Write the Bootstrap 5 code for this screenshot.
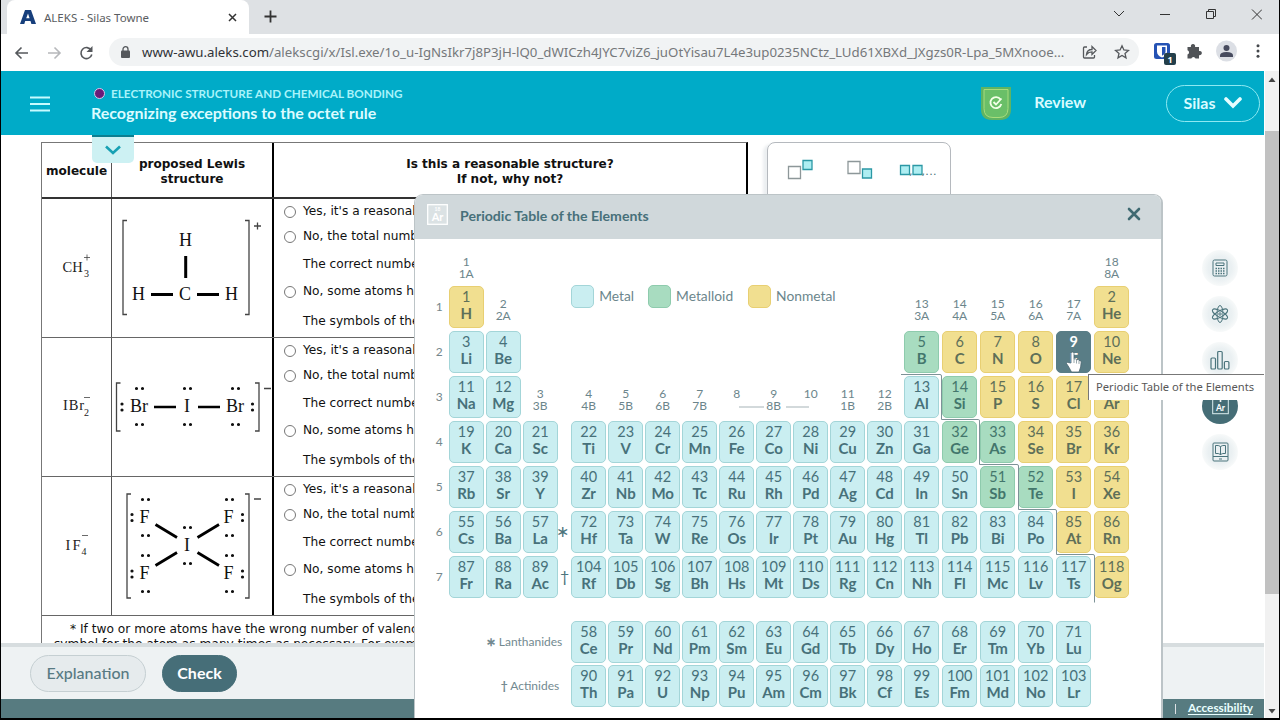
<!DOCTYPE html>
<html lang="en">
<head>
<meta charset="utf-8">
<title>ALEKS - Silas Towne</title>
<link href="https://cdn.jsdelivr.net/npm/bootstrap@5.3.0/dist/css/bootstrap.min.css" rel="stylesheet">
<style>
body{width:1280px;height:720px;overflow:hidden;background:#fff;font-family:"Lato","Liberation Sans",sans-serif;color:#4b747c}
.window{width:1280px;height:720px;border:solid #000;border-width:0 1px 2px 1px;overflow:hidden;background:#fff}
svg{display:block;flex:none}
.tabstrip{height:34px;background:#dee1e4;padding-left:6px}
.tab-on{width:242px;height:34px;background:#fff;border-radius:8px 8px 0 0;padding:0 12px 0 13px;font:11.500px "Noto Sans",sans-serif;color:#5a5d61}
.toolbar{height:37px;background:#fff;padding-left:13px}
.url{width:1030px;height:28px;margin-left:9px;margin-bottom:1px;border-radius:14px;background:#f1f3f4;font:13.240px "Noto Sans",sans-serif;color:#75787b;padding:0 9px 0 12px;white-space:nowrap;flex:none}
.url b{font-weight:400;color:#303236}
.page-col{width:1263px}
.topbar{height:64px;background:#00abc8;color:#d9fbff;width:1263px}
.topic{font-size:11.720px;font-weight:700;line-height:14px;white-space:nowrap;color:#a9f3fa}
.title{font-size:16px;font-weight:700;line-height:18px;white-space:nowrap;color:#dcfbff}
.dot-p{width:11px;height:11px;border-radius:50%;background:#6a1b78;border:1px solid #d6c8ea}
.user{width:94px;height:37px;border:1px solid #8ee9f2;border-radius:19px;font-weight:700;font-size:16px}
.work{height:508px;width:1263px;overflow:hidden;font-family:"DejaVu Sans",sans-serif;color:#111}
.q{width:707px;margin:7px 0 0 40px;border:1px solid #777;border-right:2px solid #000;border-bottom:0;font-size:12.2px;flex:none}
.q .line{border-bottom:1px solid #666;height:139px}
.q .line.hd{height:56px;border-bottom:2px solid #333;font-weight:700;font-size:12.050px;line-height:15px;text-align:center}
.q .line svg{margin-top:-1px}
.c1{width:70px;border-right:1px solid #555;flex:none}
.c2{width:162px;border-right:2px solid #000;flex:none}
.c3{padding:4px 0 0 10px;white-space:nowrap}
.opt{height:16px;line-height:16px}
.opt i{width:12px;height:12px;border:1px solid #777;border-radius:50%;margin:1px 7px 0 0;background:#fff}
.ind{padding-left:19px}
.pad{width:184px;height:90px;margin:7px 0 0 19px;border:1px solid #b5b9be;border-radius:8px;box-shadow:-4px 2px 3px #eceff1;padding:0 4px 0 19px}
.rail{width:36px;margin:115px 26px 0 auto;gap:10px}
.rnd{width:36px;height:36px;border-radius:50%;background:radial-gradient(#eaf0f2 45%,#f8fafa 72%);flex:none}
.rnd.on{background:#456d76}
.actions{height:56px;border-top:4px solid #d7dddf;background:#eef2f3;padding-left:29px;gap:16px;width:1263px}
.pill{height:37px;border-radius:19px;font-size:16px;font-weight:500;border:1px solid #c5cfd2;background:#e6ebed;color:#587a83;width:116px}
.pill.go{width:75px;background:#466e78;border-color:#466e78;color:#fff;font-weight:700}
.foot{height:19px;background:#577b80;color:#e9ffff;font-size:11.800px;font-weight:700;width:1263px;padding-right:11px}
.foot u{text-underline-offset:2px;margin-top:-2px}
.scrollb{width:14px;background:#f1f1f1;height:647px}
.thumb{height:463px;background:#c1c1c1}
.flap{left:92px;top:135px;width:42px;height:28px;background:#cdf1f3;border-top:2px solid #0b7f91;border-radius:0 0 5px 5px}
.ptable{left:413px;top:194px;width:749px;height:540px;background:#fff;border:solid #bcc4c7;border-width:1px 2px 0 1px;border-radius:9px 9px 0 0;overflow:hidden}
.pt-head{height:44px;background:#d0d8db;padding:0 20px 0 13px;font-size:14.100px;font-weight:700;color:#47707a}
.els{display:grid;grid-template-columns:13px 37px 37px 48.5px repeat(9,37px) repeat(6,38px);grid-template-rows:45px repeat(7,45px) 19.5px 44px 44px;margin:2px 0 0 20.700px;position:relative}
.el{width:35px;height:42px;border:1px solid #a3d5d8;border-radius:5px;background:#caeef1;text-align:center;color:#47717a}
.el span,.el strong{display:block;font-size:14.500px;line-height:16px;margin:0 -3px}
.el span{padding-top:2px}
.el strong{font-weight:700;font-size:15px;line-height:16px}
.el.loid{background:#a8dcc0;border-color:#8ecbad;color:#43766c}
.el.non{background:#f1df90;border-color:#e8cf72;color:#5e6f58}
.el.sel{background:#597d86;border-color:#597d86;color:#fff}
.el.sel span{font-weight:700}
.grp{width:35px;font-size:12px;line-height:12px;text-align:center;align-self:end;padding-bottom:9px;color:#6b858b}
.grp.hi{padding-bottom:6px}
.per{font-size:12px;color:#75878c;line-height:41px}
.key i{width:23px;height:23px;border-radius:5px;border:1px solid #a3d5d8;background:#caeef1}
.key{grid-row:2;grid-column:5 / 13;font-size:13.800px;color:#6b868c;height:21px}
.tip{left:1088px;top:374px;width:176px;height:26px;background:#fff;border:solid #777;border-width:1px 0 0 1px;font:11.200px/24px "Noto Sans",sans-serif;color:#575757;padding-left:7px;white-space:nowrap}
.series{font-size:12px;color:#728990;white-space:nowrap;line-height:41px}
</style>
</head>
<body>
<div class="window position-relative">
  <div class="tabstrip d-flex align-items-end">
    <div class="tab-on d-flex align-items-center">
      <svg width="16" height="16" viewBox="0 0 16 16"><path d="M5 1h6l5 14h-4.600l-.9-3H5.200l-.9 3H0zM8 4.500L6.200 9.300h3.400z" fill="#173f7c"/></svg>
      <span class="ms-2">ALEKS - Silas Towne</span>
      <svg class="ms-auto" width="9" height="9" viewBox="0 0 9 9"><path d="M1 1l7 7M8 1L1 8" stroke="#333" stroke-width="1.500"/></svg>
    </div>
    <svg width="13" height="13" viewBox="0 0 13 13" style="margin:0 0 11px 15px"><path d="M6.500 0.500v12M0.500 6.500h12" stroke="#333" stroke-width="1.800"/></svg>
    <svg class="ms-auto" width="150" height="14" viewBox="1112 7 150 14" style="margin:0 17px 13px 0" fill="none" stroke="#333"><path d="M1114 11l5 5 5-5M1160 14.500h10M1252 9.500l10 10M1262 9.500l-10 10M1208.500 11.500v-2h7v7h-2M1206.500 11.500h7v7h-7z"/></svg>
  </div>
  <div class="toolbar d-flex align-items-center">
    <svg width="86" height="16" viewBox="14 44 86 16" fill="none" stroke-width="1.600"><path d="M28 52H16M21.500 46.500L16 52l5.500 5.500" stroke="#55585c"/><path d="M48 52h12M54.500 46.500L60 52l-5.500 5.500" stroke="#b6b8bb"/><path d="M91.200 49.200A5.500 5.500 0 1 0 91.800 53.500" stroke="#55585c"/><path d="M92.500 45v6h-6z" fill="#55585c"/></svg>
    <div class="url d-flex align-items-center">
      <svg width="9" height="12" viewBox="0 0 9 12"><rect y="4.500" width="9" height="7.500" rx="1" fill="#55585c"/><path d="M2 5V3.200a2.500 2.500 0 0 1 5 0V5" fill="none" stroke="#55585c" stroke-width="1.300"/></svg>
      <span style="margin-left:12px"><b>www-awu.aleks.com</b>/alekscgi/x/Isl.exe/1o_u-IgNsIkr7j8P3jH-lQ0_dWICzh4JYC7viZ6_juOtYisau7L4e3up0235NCtz_LUd61XBXd_JXgzs0R-Lpa_5MXnooe...</span>
      <svg class="ms-auto" width="48" height="16" viewBox="1082 44 48 16" fill="none" stroke="#55585c" stroke-width="1.300"><path d="M1087 47h-2.500q-1 0-1 1v9q0 1 1 1h9q1 0 1-1v-2M1086.500 54.500q.5-5 5.500-5V46.500l4 4-4 4v-2.600q-3.500 0-5.500 2.600z"/><path d="M1122 45.800l1.900 4.200 4.500.4-3.400 3 1 4.500-4-2.400-4 2.400 1-4.500-3.400-3 4.500-.4z"/></svg>
    </div>
    <svg class="ms-auto" width="112" height="26" viewBox="1152 41 112 26" style="margin-right:15px"><rect x="1154" y="44" width="16" height="16" rx="2.500" fill="#2452b4"/><path d="M1157 46.500h10v6q0 4-5 6-5-2-5-6z" fill="#fff"/><path d="M1162 48h3.500v4.500q0 2.500-3.500 4.200z" fill="#2452b4"/><rect x="1164" y="54" width="12" height="12" rx="2" fill="#233f4b"/><text x="1170" y="63.500" font-size="9" font-weight="700" text-anchor="middle" fill="#fff" font-family="Noto Sans">1</text><path d="M1187.500 48h3.500a2.200 2.200 0 1 1 4 0h4v4a2.200 2.200 0 1 1 0 4.200V59.500h-3.500a2.200 2.200 0 0 0-4.200 0h-3.800v-4a2.200 2.200 0 0 0 0-4.200z" fill="#505357"/><circle cx="1226.500" cy="52" r="10.500" fill="#dcdfe5"/><circle cx="1226.500" cy="49" r="3" fill="#474b5e"/><path d="M1220 58v-1.500q0-3.500 6.500-3.500t6.500 3.500V58z" fill="#474b5e"/><g fill="#44474b"><circle cx="1258" cy="46.800" r="1.500"/><circle cx="1258" cy="52" r="1.500"/><circle cx="1258" cy="57.200" r="1.500"/></g></svg>
  </div>
  <div class="d-flex">
    <div class="page-col">
      <header class="topbar d-flex align-items-center">
        <svg width="20" height="16" viewBox="0 0 20 16" style="margin:1px 0 0 29px"><path d="M0 1.500h20M0 8h20M0 14.500h20" stroke="#c7fbff" stroke-width="1.800"/></svg>
        <div style="margin:2px 0 0 41px">
          <div class="d-flex align-items-center topic"><span class="dot-p" style="margin:0 6px 0 3px"></span>ELECTRONIC STRUCTURE AND CHEMICAL BONDING</div>
          <div class="title" style="margin-top:4px">Recognizing exceptions to the octet rule</div>
        </div>
        <svg class="ms-auto" width="32" height="35" viewBox="0 0 32 35"><path d="M1 1h30v22q0 11-11 11h-8Q1 34 1 23z" fill="#5fb463"/><path d="M4 3.500h24v19q0 9-9 9h-6q-9 0-9-9z" fill="#6abf68" stroke="#a9dd7c"/><path d="M20.500 13.500a5.500 5.500 0 1 0 .8 4.500" fill="none" stroke="#f3ffe8" stroke-width="1.800"/><path d="M13.500 16l2.500 2.500 5.500-6" fill="none" stroke="#f3ffe8" stroke-width="1.800"/></svg>
        <div style="margin:0 0 2px 22px;font-size:16px;font-weight:700">Review</div>
        <div class="user d-flex align-items-center justify-content-center" style="margin:0 4px 0 80px">Silas
          <svg width="18" height="12" viewBox="0 0 18 12" style="margin-left:9px"><path d="M2 2l7 7 7-7" fill="none" stroke="#e6fdff" stroke-width="3.600" stroke-linecap="round"/></svg>
        </div>
      </header>
      <main class="work d-flex align-items-start">
        <div class="q">
          <div class="line hd d-flex">
            <div class="c1 d-flex align-items-center justify-content-center" style="padding-top:2px">molecule</div>
            <div class="c2 pt-2"><div style="padding-top:6px">proposed Lewis<br>structure</div></div>
            <div class="flex-fill pt-2"><div style="padding-top:6px">Is this a reasonable structure?<br>If not, why not?</div></div>
          </div>
          <div class="line d-flex">
            <div class="c1"><svg width="69" height="138" viewBox="42 198 69 138" font-family="Liberation Serif" font-size="14.500" fill="#222"><text x="62.500" y="272">CH</text><text x="84" y="277" font-size="10">3</text><path d="M84 257.500h6M87 254.500v6" stroke="#444" stroke-width=".8"/></svg></div>
            <div class="c2"><svg width="160" height="138" viewBox="112 198 160 138" font-family="Liberation Serif" font-size="18" text-anchor="middle" fill="#111"><g fill="none" stroke="#444" stroke-width="1.300"><path d="M127 220.500h-4v94h4M245 220.500h4v94h-4M254 226h7M257.500 222.500v7"/></g><path d="M185.700 256v22M151 294.500h22M197 294.500h22" stroke="#000" stroke-width="3"/><text x="185.500" y="246">H</text><text x="138.500" y="300">H</text><text x="185" y="300">C</text><text x="231.500" y="300">H</text></svg></div>
            <div class="c3"><div class="opt d-flex align-items-center"><i></i>Yes, it's a reasonable structure.</div><div class="opt d-flex align-items-center" style="margin-top:9px"><i></i>No, the total number of valence electrons is wrong.</div><div class="opt ind" style="margin-top:12px">The correct number is:</div><div class="opt d-flex align-items-center" style="margin-top:11px"><i></i>No, some atoms have the wrong number.</div><div class="opt ind" style="margin-top:14px">The symbols of the problem atoms are:</div></div>
          </div>
          <div class="line d-flex">
            <div class="c1"><svg width="69" height="138" viewBox="42 337 69 138" font-family="Liberation Serif" font-size="14.500" fill="#222"><text x="63" y="410" textLength="21">IBr</text><text x="84" y="415.500" font-size="10">2</text><path d="M84 397.500h6" stroke="#444" stroke-width=".8"/></svg></div>
            <div class="c2"><svg width="160" height="138" viewBox="112 337 160 138" font-family="Liberation Serif" font-size="18" text-anchor="middle" fill="#111"><path d="M120.500 383h-4v48h4M255 383h4v48h-4M264 388.500h7" fill="none" stroke="#444" stroke-width="1.300"/><path d="M154 407h22M198 407h22" stroke="#000" stroke-width="2.600"/><text x="139" y="412">Br</text><text x="187" y="412">I</text><text x="235" y="412">Br</text><path d="M136.500 388.500h0M142.500 388.500h0M184.500 388.500h0M190.500 388.500h0M232.500 388.500h0M238.500 388.500h0M136.500 424.500h0M142.500 424.500h0M184.500 424.500h0M190.500 424.500h0M232.500 424.500h0M238.500 424.500h0M122 404h0M122 410h0M252.500 404h0M252.500 410h0" stroke="#111" stroke-width="3.200" stroke-linecap="round"/></svg></div>
            <div class="c3"><div class="opt d-flex align-items-center"><i></i>Yes, it's a reasonable structure.</div><div class="opt d-flex align-items-center" style="margin-top:9px"><i></i>No, the total number of valence electrons is wrong.</div><div class="opt ind" style="margin-top:12px">The correct number is:</div><div class="opt d-flex align-items-center" style="margin-top:11px"><i></i>No, some atoms have the wrong number.</div><div class="opt ind" style="margin-top:14px">The symbols of the problem atoms are:</div></div>
          </div>
          <div class="line d-flex">
            <div class="c1"><svg width="69" height="138" viewBox="42 476 69 138" font-family="Liberation Serif" font-size="14.500" fill="#222"><text x="65.500" y="550" textLength="15">IF</text><text x="81.500" y="555" font-size="10">4</text><path d="M82 535.500h6" stroke="#444" stroke-width=".8"/></svg></div>
            <div class="c2"><svg width="160" height="138" viewBox="112 476 160 138" font-family="Liberation Serif" font-size="18" text-anchor="middle" fill="#111"><path d="M131 494h-4v104h4M245 494h4v104h-4M254 499h7" fill="none" stroke="#444" stroke-width="1.300"/><path d="M155.500 524.500l21.500 13M219 524.500l-21.500 13M155.500 565.500l21.500-13M219 565.500l-21.500-13" stroke="#000" stroke-width="2.800"/><text x="144.500" y="523">F</text><text x="228.500" y="523">F</text><text x="187" y="551">I</text><text x="144.500" y="579">F</text><text x="228.500" y="579">F</text><path d="M142.500 499.500h0M148.500 499.500h0M226.500 499.500h0M232.500 499.500h0M142.500 535.500h0M148.500 535.500h0M226.500 535.500h0M232.500 535.500h0M142.500 555.500h0M148.500 555.500h0M226.500 555.500h0M232.500 555.500h0M142.500 591.500h0M148.500 591.500h0M226.500 591.500h0M232.500 591.500h0M184.500 527.500h0M190.500 527.500h0M184.500 563.500h0M190.500 563.500h0M132 514.500h0M132 520.500h0M242.500 514.500h0M242.500 520.500h0M132 571h0M132 577h0M242.500 571h0M242.500 577h0" stroke="#111" stroke-width="3.200" stroke-linecap="round"/></svg></div>
            <div class="c3"><div class="opt d-flex align-items-center"><i></i>Yes, it's a reasonable structure.</div><div class="opt d-flex align-items-center" style="margin-top:9px"><i></i>No, the total number of valence electrons is wrong.</div><div class="opt ind" style="margin-top:12px">The correct number is:</div><div class="opt d-flex align-items-center" style="margin-top:11px"><i></i>No, some atoms have the wrong number.</div><div class="opt ind" style="margin-top:14px">The symbols of the problem atoms are:</div></div>
          </div>
          <div class="text-nowrap" style="padding:6px 0 0 12px;line-height:14.500px"><span style="padding-left:16px">* If two or more atoms have the wrong number of valence</span><br>symbol for the atom as many times as necessary. For example</div>
        </div>
        <div class="pad">
          <svg width="158" height="50" viewBox="787 143 158 50" fill="none" stroke-width="1.300"><g stroke="#8d9799"><path d="M788.500 166.500h12v12h-12zM848 161.500h12v12h-12z"/></g><g stroke="#2b98a5" fill="#aeeef2"><path d="M803 160.500h9v9h-9zM862.500 169h9v9h-9zM900.500 165.500h9v9h-9zM913 165.500h9v9h-9z"/></g><text x="909" y="175" font-size="11" fill="#47717a" stroke="none">,</text><text x="921.500" y="175" font-size="11" fill="#47717a" stroke="none" textLength="15">,...</text></svg>
        </div>
        <nav class="rail d-flex flex-column">
          <div class="rnd d-flex align-items-center justify-content-center"><svg width="16" height="18" viewBox="0 0 16 18" fill="none" stroke="#4b747c"><rect x="1" y="1" width="14" height="16" rx="1.500"/><path d="M4 4h8v2.500H4z"/><path d="M3.500 9.500h9M3.500 12h9M3.500 14.500h9" stroke-width="1.500" stroke-dasharray="1.500 1"/></svg></div>
          <div class="rnd d-flex align-items-center justify-content-center"><svg width="18" height="20" viewBox="0 0 18 20" fill="none" stroke="#4b747c"><ellipse cx="9" cy="10" rx="3" ry="8.500"/><ellipse cx="9" cy="10" rx="3" ry="8.500" transform="rotate(60 9 10)"/><ellipse cx="9" cy="10" rx="3" ry="8.500" transform="rotate(120 9 10)"/><circle cx="9" cy="10" r="1.200"/></svg></div>
          <div class="rnd d-flex align-items-center justify-content-center"><svg width="20" height="20" viewBox="0 0 20 20" fill="none" stroke="#4b747c" stroke-width="1.200"><rect x="1" y="8" width="4.500" height="11" rx="1"/><rect x="7.700" y="1.500" width="4.500" height="17.500" rx="1"/><rect x="14.400" y="11.500" width="4.500" height="7.500" rx="1"/></svg></div>
          <div class="rnd on d-flex align-items-center justify-content-center"><svg width="17" height="18" viewBox="0 0 17 18"><rect x=".7" y=".7" width="15.600" height="16" fill="none" stroke="#dbeef0"/><circle cx="8.500" cy="4" r="1" fill="#fff"/><text x="8.500" y="13.500" font-size="8.500" font-weight="700" text-anchor="middle" fill="#fff" font-family="Lato">Ar</text></svg></div>
          <div class="rnd d-flex align-items-center justify-content-center"><svg width="17" height="20" viewBox="0 0 17 20" fill="none" stroke="#4b747c"><rect x="1" y="1" width="15" height="18" rx="1"/><path d="M1 14.500h15M8.500 4.500v8.500M3.500 3.500q3-.5 5 1 2-1.500 5-1v8q-3-.5-5 1-2-1.500-5-1zM7 17h3"/></svg></div>
        </nav>
      </main>
      <div class="actions d-flex align-items-center">
        <div class="pill d-flex align-items-center justify-content-center">Explanation</div>
        <div class="pill go d-flex align-items-center justify-content-center">Check</div>
      </div>
      <footer class="foot d-flex align-items-center justify-content-end"><span class="border-start" style="height:10px;margin-right:12px"></span><u>Accessibility</u></footer>
    </div>
    <div class="scrollb ms-auto">
      <svg width="14" height="60" viewBox="0 0 14 60"><path d="M3.500 11L7 6.500l3.500 4.500z" fill="#444"/></svg>
      <div class="thumb"></div>
      <svg width="14" height="124" viewBox="0 0 14 124"><path d="M3.500 115h7L7 119.500z" fill="#444"/></svg>
    </div>
  </div>

  <div class="flap position-absolute d-flex align-items-center justify-content-center" style="margin-left:-1px"><svg width="16" height="10" viewBox="0 0 16 10"><path d="M1 1.500L8 8l7-6.500" fill="none" stroke="#17a0b3" stroke-width="2.600"/></svg></div>

  <section class="ptable position-absolute">
    <div class="pt-head d-flex align-items-center">
      <svg width="21" height="21" viewBox="0 0 21 21" style="margin:0 0 5px -1px"><rect x=".7" y=".7" width="19.600" height="19.600" fill="#dbe2e4" stroke="#fff" stroke-width="1.300"/><text x="10.500" y="6.500" font-size="5" text-anchor="middle" fill="#fff">18</text><text x="10.500" y="16.500" font-size="11" font-weight="700" text-anchor="middle" fill="#fff">Ar</text></svg>
      <span style="margin:0 0 3px 12px">Periodic Table of the Elements</span>
      <svg class="ms-auto" width="14" height="14" viewBox="0 0 14 14" style="margin-bottom:6px"><path d="M2 2l10 10M12 2L2 12" stroke="#3f6a72" stroke-width="2.600" stroke-linecap="round"/></svg>
    </div>
    <div class="els" id="els">
      <div class="key d-flex align-items-center"><i></i><span style="margin:0 14px 0 5px">Metal</span><i style="background:#a8dcc0;border-color:#8ecbad"></i><span style="margin:0 15px 0 5px">Metalloid</span><i style="background:#f1df90;border-color:#e8cf72"></i><span style="margin-left:5px">Nonmetal</span></div>
      <div class="series text-end" style="grid-row:10;grid-column:3 / 5;padding-right:12px"><b>∗</b> Lanthanides</div>
      <div class="series text-end" style="grid-row:11;grid-column:3 / 5;padding-right:12px"><b>†</b> Actinides</div>
      <svg class="position-absolute" style="left:464px;top:132px" width="196" height="232" viewBox="899 373 196 232" fill="none" stroke="#7d9297"><path d="M900 374.500h39q1.500 0 1.500 1.500v43.500h37q1 0 1 1.500v43.500h37.500q1.500 0 1.500 1.500v43.500h36.500q1.500 0 1.500 1.500v43.500h36.500q1.500 0 1.500 1.500v46.500"/></svg>
      <svg class="position-absolute" style="left:302px;top:165px" width="72" height="2" viewBox="0 0 72 2"><path d="M1 1h25M48 1h23" stroke="#a6b3b7"/></svg>
    </div>
  </section>

  <svg class="position-absolute" style="left:1064px;top:351px" width="18" height="22" viewBox="0 0 18 22"><path d="M6 12V2.500q0-1.500 1.500-1.500T9 2.500V8q2-.8 2.500.7 2-.6 2.500.8 2.200-.5 2.200 1.500 0 5-2.200 10H6.500Q4 16 1.500 12.500q1-1.800 2.500-.8z" fill="#fff" stroke="#4b6670" stroke-width=".8"/><path d="M9 8v4M11.500 9v3.500M14 10v3" stroke="#6b8188" stroke-width=".7"/></svg>
  <div class="tip position-absolute" style="margin-left:-1px">Periodic Table of the Elements</div>
</div>
<script>
// Each row: [grid row, first grid column, first atomic number, symbols]
const runs = [
  [2,2,1,'H'],[2,19,2,'He'],[3,2,3,'Li Be'],[3,14,5,'B C N O F Ne'],
  [4,2,11,'Na Mg'],[4,14,13,'Al Si P S Cl Ar'],
  [5,2,19,'K Ca Sc Ti V Cr Mn Fe Co Ni Cu Zn Ga Ge As Se Br Kr'],
  [6,2,37,'Rb Sr Y Zr Nb Mo Tc Ru Rh Pd Ag Cd In Sn Sb Te I Xe'],
  [7,2,55,'Cs Ba La'],[7,5,72,'Hf Ta W Re Os Ir Pt Au Hg Tl Pb Bi Po At Rn'],
  [8,2,87,'Fr Ra Ac'],[8,5,104,'Rf Db Sg Bh Hs Mt Ds Rg Cn Nh Fl Mc Lv Ts Og'],
  [10,5,58,'Ce Pr Nd Pm Sm Eu Gd Tb Dy Ho Er Tm Yb Lu'],
  [11,5,90,'Th Pa U Np Pu Am Cm Bk Cf Es Fm Md No Lr']
];
const metalloid = new Set([5,14,32,33,51,52]);
const nonmetal = new Set([1,2,6,7,8,10,15,16,17,18,34,35,36,53,54,85,86,118]);
let html = '';
for (const [row, col, z0, list] of runs)
  list.split(' ').forEach((sym, i) => {
    const z = z0 + i, kind = z === 9 ? 'sel' : metalloid.has(z) ? 'loid' : nonmetal.has(z) ? 'non' : '';
    html += `<div class="el ${kind}" style="grid-area:${row}/${col + i}"><span>${z}</span><strong>${sym}</strong></div>`;
  });
const groups = [[1,1,'1A'],[1,18,'8A'],[2,2,'2A'],[2,13,'3A'],[2,14,'4A'],[2,15,'5A'],[2,16,'6A'],[2,17,'7A'],
  [4,3,'3B'],[4,4,'4B'],[4,5,'5B'],[4,6,'6B'],[4,7,'7B'],[4,8,'&nbsp;'],[4,9,'8B'],[4,10,'&nbsp;'],[4,11,'1B'],[4,12,'2B']];
for (const [row, g, name] of groups)
  html += `<div class="grp ${row === 1 ? 'hi' : ''}" style="grid-area:${row}/${g + 1}">${g}<br>${name}</div>`;
for (let p = 1; p < 8; p++) html += `<div class="per" style="grid-area:${p + 1}/1">${p}</div>`;
['∗', '†'].forEach((m, i) => html += `<div class="text-end" style="grid-area:${7 + i}/4;padding-right:2px;line-height:40px;font-size:16px">${m}</div>`);
document.getElementById('els').insertAdjacentHTML('afterbegin', html);
</script>
<script src="https://cdn.jsdelivr.net/npm/bootstrap@5.3.0/dist/js/bootstrap.bundle.min.js"></script>
</body>
</html>
